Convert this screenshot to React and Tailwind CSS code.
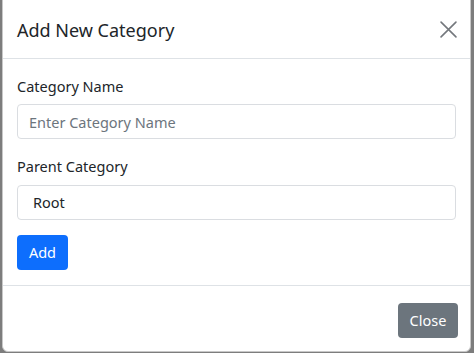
export default function App() {
  return (
    <div
      className="h-[353px] w-[474px] overflow-hidden bg-[#7d7d7d] pl-[2px] pr-[3px]"
      style={{ fontFamily: '"Noto Sans", "Open Sans", sans-serif' }}
    >
      <div className="-mt-[8px] w-[469px] rounded-b-[6px] border border-[#c8c8c8] bg-white text-[#212529]">
        <div className="flex h-[66px] items-center justify-between border-b border-[#dee2e6] pl-[14px] pr-[13px] pt-[8px]">
          <h5 className="text-[18px] leading-[28px] font-normal">Add New Category</h5>
          <button type="button" aria-label="Close" className="flex h-[18px] w-[18px] items-center justify-center">
            <svg width="17" height="17" viewBox="0 0 16 16" fill="none" stroke="#74787d" strokeWidth="1.5" strokeLinecap="round">
              <path d="M1 1l14 14M15 1L1 15" />
            </svg>
          </button>
        </div>

        <div className="px-[14px] pt-[16px] pb-[15px]">
          <label className="mb-[6px] block text-[14.5px] leading-[23px]">Category Name</label>
          <input
            type="text"
            placeholder="Enter Category Name"
            className="mb-[16px] block h-[35px] w-full rounded-[4px] border border-[#dadde1] px-[11px] text-[14.5px] text-[#212529] outline-none placeholder:text-[#6c757d]"
          />

          <label className="mb-[7px] block text-[14.5px] leading-[23px]">Parent Category</label>
          <div className="mb-[15px] flex h-[35px] w-full items-center rounded-[4px] border border-[#dadde1] pl-[15px] text-[14.5px]">
            Root
          </div>

          <button type="button" className="h-[35px] w-[51px] rounded-[4px] bg-[#0d6efd] text-[14.5px] text-white">
            Add
          </button>
        </div>

        <div className="flex justify-end border-t border-[#dee2e6] px-[12px] pt-[17px] pb-[13px]">
          <button type="button" className="h-[35px] w-[60px] rounded-[4px] bg-[#6c757d] text-[14.5px] text-white">
            Close
          </button>
        </div>
      </div>
    </div>
  );
}
